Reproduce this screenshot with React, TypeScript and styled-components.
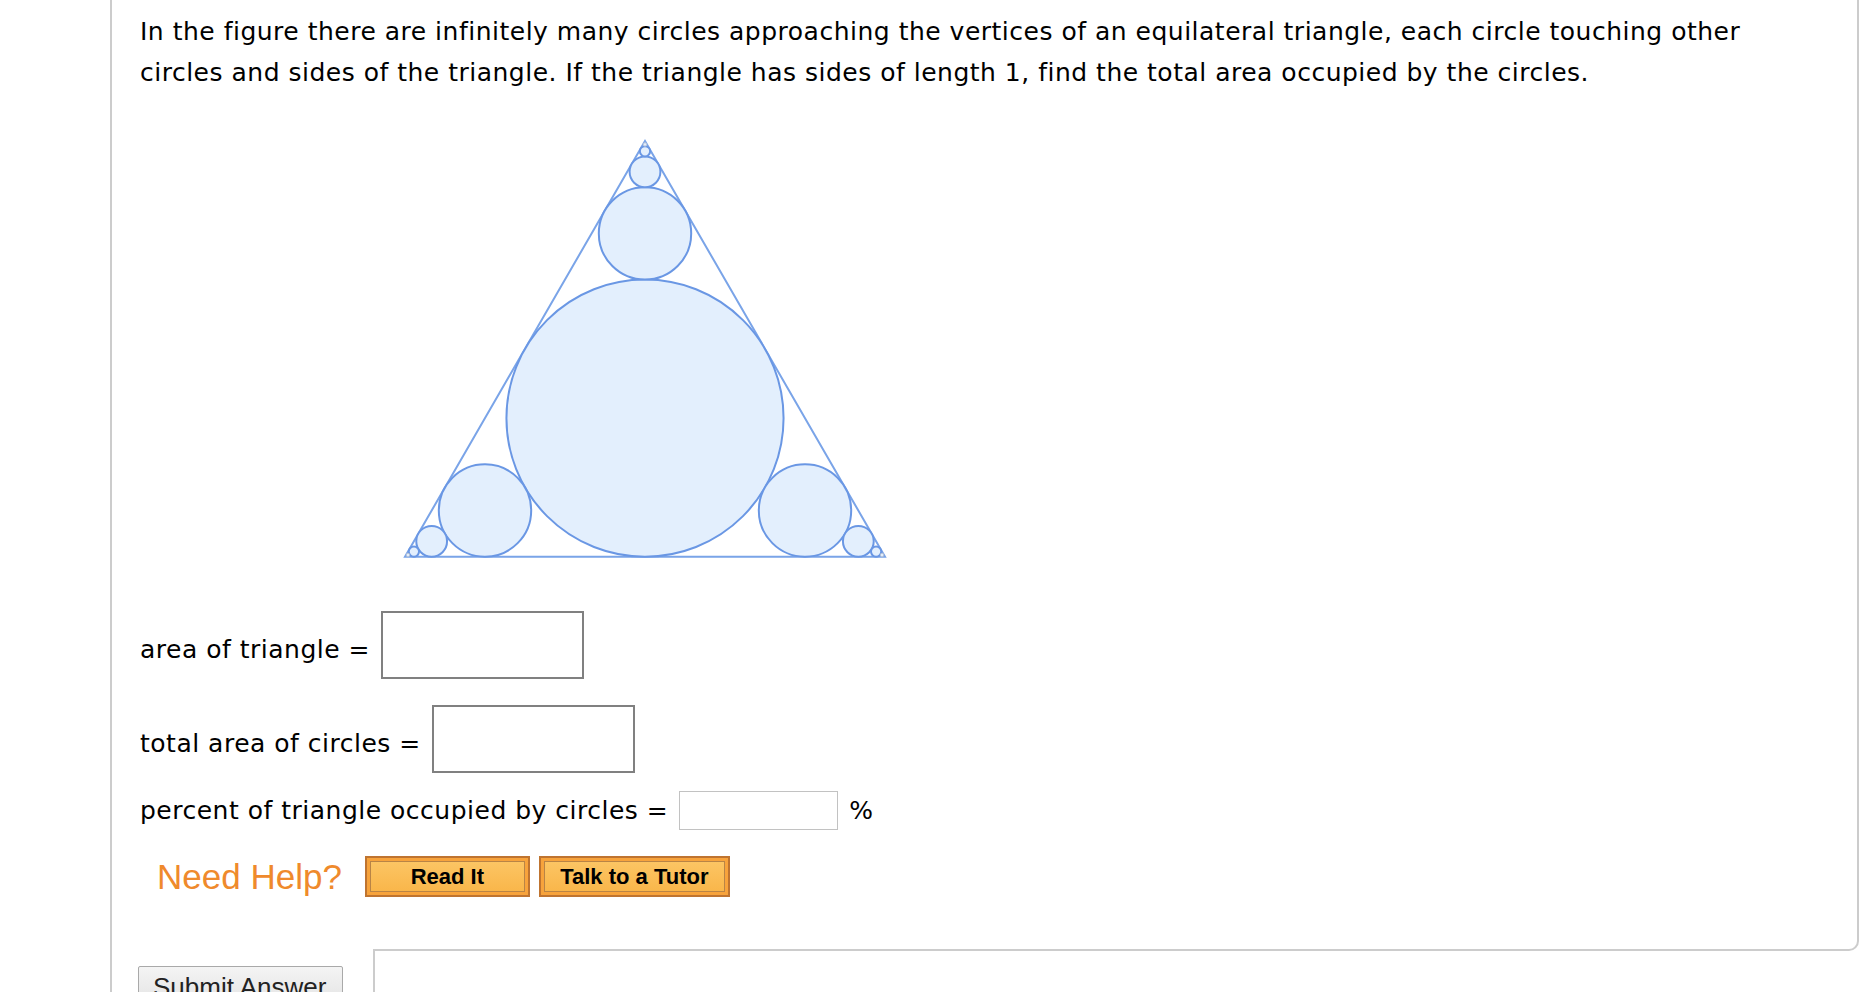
import styled, { createGlobalStyle } from "styled-components";

const GlobalStyle = createGlobalStyle`
  html, body {
    margin: 0;
    padding: 0;
    background: #fff;
  }
  body {
    font-family: "DejaVu Sans", Verdana, sans-serif;
    color: #000;
  }
`;

// triangle geometry, in svg coords
const SIDE = 480;
const H = (SIDE * Math.sqrt(3)) / 2;
const IN_R = SIDE / (2 * Math.sqrt(3));
const BASE_Y = 21 + H;
const APEX = { x: 505, y: 21 };
const LEFT = { x: 505 - SIDE / 2, y: BASE_Y };
const RIGHT = { x: 505 + SIDE / 2, y: BASE_Y };
const CENTER = { x: 505, y: BASE_Y - IN_R };

const vertexCircles = (v: { x: number; y: number }) => {
  const dx = CENTER.x - v.x;
  const dy = CENTER.y - v.y;
  const len = Math.hypot(dx, dy);
  const out = [];
  for (let k = 1; k <= 4; k++) {
    const r = IN_R / Math.pow(3, k);
    out.push({ cx: v.x + (dx / len) * 2 * r, cy: v.y + (dy / len) * 2 * r, r });
  }
  return out;
};

const circles = [
  { cx: CENTER.x, cy: CENTER.y, r: IN_R },
  ...vertexCircles(APEX),
  ...vertexCircles(LEFT),
  ...vertexCircles(RIGHT),
];

function TriangleFigure() {
  return (
    <FigureSvg width={780} height={460} viewBox="0 0 780 460">
      <polygon
        points={`${APEX.x},${APEX.y} ${LEFT.x},${LEFT.y} ${RIGHT.x},${RIGHT.y}`}
        fill="#fff"
        stroke="#7aa4e8"
        strokeWidth={2}
      />
      {circles.map((c, i) => (
        <circle
          key={i}
          cx={c.cx}
          cy={c.cy}
          r={c.r}
          fill="#e3effd"
          stroke={c.r < 3 ? "#b8c4d8" : "#6a97e4"}
          strokeWidth={c.r < 3 ? 1 : 2}
        />
      ))}
    </FigureSvg>
  );
}

export default function App() {
  return (
    <>
      <GlobalStyle />
      <Page>
        <Panel>
          <Body>
            <Prompt>
              In the figure there are infinitely many circles approaching the vertices of an equilateral triangle, each
              circle touching other circles and sides of the triangle. If the triangle has sides of length 1, find the
              total area occupied by the circles.
            </Prompt>
            <TriangleFigure />
            <AnswerRow $mt={31}>
              <Label $drop={9}>area of triangle =</Label>
              <AnswerInput $w={203} $h={68} />
            </AnswerRow>
            <AnswerRow $mt={26}>
              <Label $drop={9}>total area of circles =</Label>
              <AnswerInput $w={203} $h={68} />
            </AnswerRow>
            <AnswerRow $mt={18}>
              <Label $drop={0}>percent of triangle occupied by circles =</Label>
              <AnswerInput $w={159} $h={39} $thin />
              <Unit>%</Unit>
            </AnswerRow>
            <HelpRow>
              <HelpLabel>Need Help?</HelpLabel>
              <HelpButton $w={165}>Read It</HelpButton>
              <HelpButton $w={191}>Talk to a Tutor</HelpButton>
            </HelpRow>
          </Body>
          <Footer>
            <SubmitCell>
              <SubmitButton>Submit Answer</SubmitButton>
            </SubmitCell>
            <PracticeBox />
          </Footer>
        </Panel>
      </Page>
    </>
  );
}

const Page = styled.div`
  padding: 0 9px 0 110px;
  min-height: 992px;
  box-sizing: border-box;
  overflow: hidden;
`;

const Panel = styled.div`
  border-left: 2px solid #cccccc;
  min-height: 992px;
`;

const Body = styled.div`
  border-right: 2px solid #cccccc;
  border-bottom: 2px solid #cccccc;
  border-bottom-right-radius: 10px;
  padding: 12px 0 52px 28px;
  font-size: 25px;
  letter-spacing: 0.5px;
`;

const Prompt = styled.p`
  margin: 0;
  line-height: 40.5px;
  padding-right: 60px;
`;

const FigureSvg = styled.svg`
  display: block;
  margin-top: 27px;
`;

const AnswerRow = styled.div<{ $mt: number }>`
  display: flex;
  align-items: center;
  margin-top: ${(p) => p.$mt}px;
  line-height: 30px;
`;

const Label = styled.span<{ $drop: number }>`
  padding-top: ${(p) => p.$drop}px;
`;

const AnswerInput = styled.input<{ $w: number; $h: number; $thin?: boolean }>`
  box-sizing: border-box;
  width: ${(p) => p.$w}px;
  height: ${(p) => p.$h}px;
  margin: 0 0 0 11px;
  border: ${(p) => (p.$thin ? "1px solid #c2c2c2" : "2px solid #808080")};
  background: #fff;
  padding: 0;
  outline: none;
`;

const Unit = styled.span`
  margin-left: 11px;
`;

const HelpRow = styled.div`
  display: flex;
  align-items: center;
  margin-top: 26px;
  padding-left: 17px;
  letter-spacing: 0;
`;

const HelpLabel = styled.span`
  font-family: "Liberation Sans", Arial, sans-serif;
  font-size: 35px;
  color: #ef8a2c;
  margin-right: 23px;
`;

const HelpButton = styled.button<{ $w: number }>`
  box-sizing: border-box;
  width: ${(p) => p.$w}px;
  height: 41px;
  margin-right: 9px;
  padding: 0;
  border: 2px solid #bf7430;
  background: linear-gradient(#fcc767, #f9b447);
  box-shadow: inset 0 0 0 3px #f7a33c, inset 0 0 0 4px #b98446;
  font-family: "Liberation Sans", Arial, sans-serif;
  font-weight: bold;
  font-size: 22px;
  color: #000;
  cursor: pointer;
`;

const Footer = styled.div`
  display: flex;
`;

const SubmitCell = styled.div`
  position: relative;
  width: 261px;
  margin-top: -2px;
  padding: 17px 0 0 26px;
  box-sizing: border-box;
  background: #fff;
`;

const SubmitButton = styled.button`
  box-sizing: border-box;
  width: 205px;
  height: 42px;
  padding: 0 0 0 14px;
  text-align: left;
  border: 1px solid #a9a9a9;
  border-radius: 2px;
  background: linear-gradient(#f4f4f4, #e2e2e2);
  font-family: "Liberation Sans", Arial, sans-serif;
  font-size: 26px;
  color: #222;
`;

const PracticeBox = styled.div`
  flex: 1;
  height: 60px;
  border-left: 2px solid #cccccc;
`;
